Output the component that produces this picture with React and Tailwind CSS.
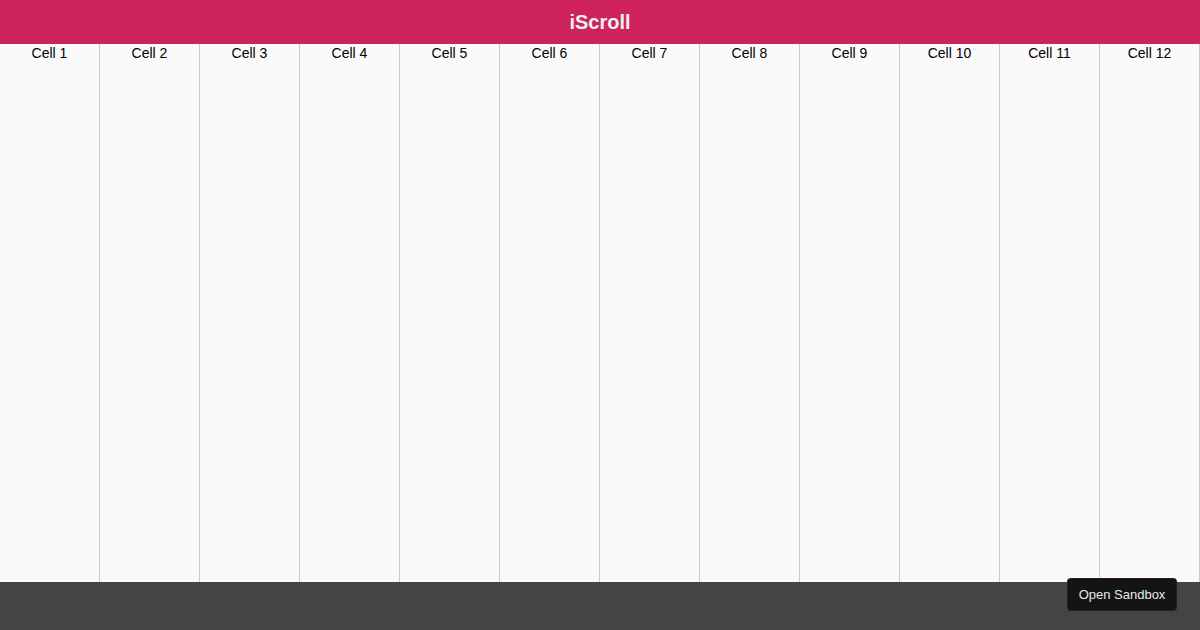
import React from 'react';

const cells = Array.from({ length: 12 }, (_, i) => `Cell ${i + 1}`);

export default function App() {
  return (
    <div className="relative flex h-[630px] w-[1200px] flex-col overflow-hidden bg-[#fafafa] font-['Liberation_Sans',Arial,sans-serif]">
      {/* Header */}
      <header className="flex h-[44px] shrink-0 items-center justify-center bg-[#cd225c]">
        <h1 className="text-[20px] font-bold leading-none text-[#f0f0f0]">iScroll</h1>
      </header>

      {/* Scroller */}
      <div className="flex flex-1">
        {cells.map((c) => (
          <div
            key={c}
            className="w-[100px] shrink-0 border-r border-[#cccccc] pt-[1px] text-center text-[14px] leading-[16px] text-black"
          >
            {c}
          </div>
        ))}
      </div>

      {/* Footer */}
      <footer className="h-[48px] shrink-0 bg-[#444444]" />

      <button className="absolute left-[1067px] top-[578px] h-[33px] w-[110px] rounded-[4px] border border-dotted border-[#5a1a2a] bg-[#141414] text-[13px] text-[#e8e8e8]">
        Open Sandbox
      </button>
    </div>
  );
}
